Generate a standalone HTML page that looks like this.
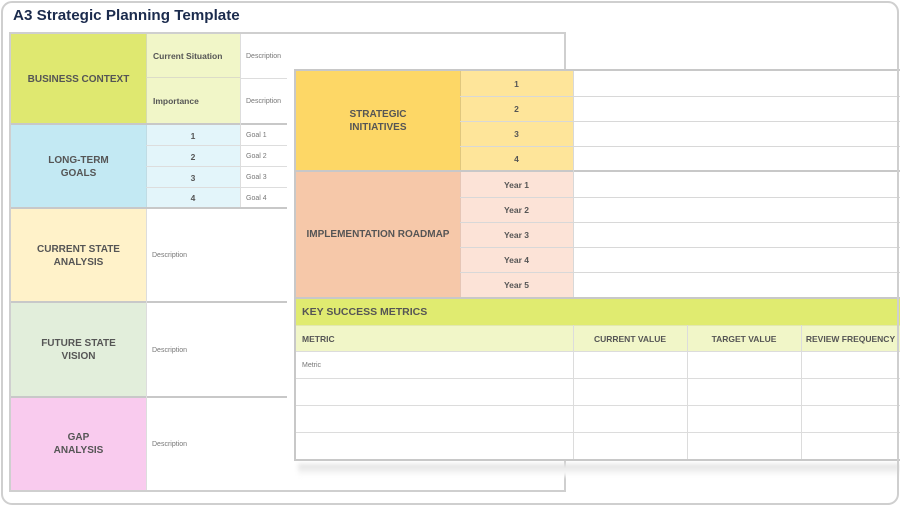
<!DOCTYPE html>
<html><head><meta charset="utf-8"><style>
*{margin:0;padding:0;box-sizing:border-box}
body{width:900px;height:506px;background:#fff;position:relative;overflow:hidden;font-family:"Liberation Sans",sans-serif}
.a{position:absolute}
.c{position:absolute;display:flex;align-items:center;justify-content:center;text-align:center;color:#555;font-weight:bold}
.l{position:absolute;display:flex;align-items:center;color:#555}
.h{font-size:10px;line-height:13px}
.s{font-size:8.5px}
.d{font-size:7px;color:#777;font-weight:normal}
</style></head><body>
<div class="a" style="left:13px;top:7px;font-size:15.2px;font-weight:bold;color:#1b2b4d">A3 Strategic Planning Template</div>

<!-- left sheet -->
<div class="a" style="left:9px;top:32px;width:557px;height:460px;border:2px solid #cfcfcf;background:#fff"></div>
<div class="c h" style="left:11px;top:34px;width:135px;height:90px;background:#dfe870">BUSINESS CONTEXT</div>
<div class="l s" style="left:146px;top:34px;width:94px;height:44px;background:#f1f6c8;padding-left:6px;font-weight:bold;border-left:1px solid #d6dcb0;border-bottom:1px solid #dcdcc8">Current Situation</div>
<div class="l s" style="left:146px;top:78px;width:94px;height:46px;background:#f1f6c8;padding-left:6px;font-weight:bold;border-left:1px solid #d6dcb0">Importance</div>
<div class="l d" style="left:246px;top:34px;height:44px">Description</div>
<div class="a" style="left:240px;top:78px;width:47px;height:1px;background:#ddd"></div>
<div class="l d" style="left:246px;top:78px;height:46px">Description</div>
<div class="a" style="left:11px;top:123px;width:276px;height:2px;background:#c8c8c8"></div>
<div class="c h" style="left:11px;top:125px;width:135px;height:83px;background:#c3e9f3">LONG-TERM<br>GOALS</div>
<div class="a" style="left:146px;top:125px;width:94px;height:83px;background:#e3f5fa;border-left:1px solid #c0dce4"></div>
<div class="c s" style="left:146px;top:125px;width:94px;height:21px">1</div>
<div class="c s" style="left:146px;top:146px;width:94px;height:21px">2</div>
<div class="c s" style="left:146px;top:167px;width:94px;height:21px">3</div>
<div class="c s" style="left:146px;top:188px;width:94px;height:20px">4</div>
<div class="l d" style="left:246px;top:125px;height:21px">Goal 1</div>
<div class="l d" style="left:246px;top:146px;height:21px">Goal 2</div>
<div class="l d" style="left:246px;top:167px;height:21px">Goal 3</div>
<div class="l d" style="left:246px;top:188px;height:20px">Goal 4</div>
<div class="a" style="left:146px;top:145px;width:141px;height:1px;background:#ddd"></div>
<div class="a" style="left:146px;top:166px;width:141px;height:1px;background:#ddd"></div>
<div class="a" style="left:146px;top:187px;width:141px;height:1px;background:#ddd"></div>
<div class="a" style="left:240px;top:34px;width:1px;height:174px;background:#ddd"></div>
<div class="a" style="left:11px;top:207px;width:276px;height:2px;background:#c8c8c8"></div>
<div class="c h" style="left:11px;top:209px;width:135px;height:93px;background:#fff2c9">CURRENT STATE<br>ANALYSIS</div>
<div class="l d" style="left:152px;top:209px;height:93px">Description</div>
<div class="a" style="left:11px;top:301px;width:276px;height:2px;background:#c8c8c8"></div>
<div class="c h" style="left:11px;top:303px;width:135px;height:94px;background:#e2eedb">FUTURE STATE<br>VISION</div>
<div class="l d" style="left:152px;top:303px;height:94px">Description</div>
<div class="a" style="left:11px;top:396px;width:276px;height:2px;background:#c8c8c8"></div>
<div class="c h" style="left:11px;top:398px;width:135px;height:92px;background:#f9cbee">GAP<br>ANALYSIS</div>
<div class="l d" style="left:152px;top:398px;height:92px">Description</div>
<div class="a" style="left:146px;top:209px;width:1px;height:281px;background:#ddd"></div>

<!-- shadow -->
<div class="a" style="left:298px;top:464px;width:602px;height:12px;background:linear-gradient(#e0e0e0,#fff);filter:blur(2px)"></div>

<!-- right sheet -->
<div class="a" style="left:294px;top:69px;width:620px;height:392px;border:2px solid #c8c8c8;background:#fff"></div>
<div class="c h" style="left:296px;top:71px;width:164px;height:100px;background:#fdd766">STRATEGIC<br>INITIATIVES</div>
<div class="a" style="left:460px;top:71px;width:113px;height:100px;background:#fee59a;border-left:1px solid #e0c77e"></div>
<div class="c s" style="left:460px;top:71px;width:113px;height:25px">1</div>
<div class="c s" style="left:460px;top:96px;width:113px;height:25px">2</div>
<div class="c s" style="left:460px;top:121px;width:113px;height:25px">3</div>
<div class="c s" style="left:460px;top:146px;width:113px;height:25px">4</div>
<div class="a" style="left:460px;top:96px;width:440px;height:1px;background:#d8d8d8"></div>
<div class="a" style="left:460px;top:121px;width:440px;height:1px;background:#d8d8d8"></div>
<div class="a" style="left:460px;top:146px;width:440px;height:1px;background:#d8d8d8"></div>
<div class="a" style="left:296px;top:170px;width:604px;height:2px;background:#c8c8c8"></div>
<div class="c h" style="left:296px;top:172px;width:164px;height:125px;background:#f6c8a9">IMPLEMENTATION ROADMAP</div>
<div class="a" style="left:460px;top:172px;width:113px;height:125px;background:#fce3d7;border-left:1px solid #e6c6b6"></div>
<div class="c s" style="left:460px;top:172px;width:113px;height:25px">Year 1</div>
<div class="c s" style="left:460px;top:197px;width:113px;height:25px">Year 2</div>
<div class="c s" style="left:460px;top:222px;width:113px;height:25px">Year 3</div>
<div class="c s" style="left:460px;top:247px;width:113px;height:25px">Year 4</div>
<div class="c s" style="left:460px;top:272px;width:113px;height:25px">Year 5</div>
<div class="a" style="left:460px;top:197px;width:440px;height:1px;background:#d8d8d8"></div>
<div class="a" style="left:460px;top:222px;width:440px;height:1px;background:#d8d8d8"></div>
<div class="a" style="left:460px;top:247px;width:440px;height:1px;background:#d8d8d8"></div>
<div class="a" style="left:460px;top:272px;width:440px;height:1px;background:#d8d8d8"></div>
<div class="a" style="left:573px;top:71px;width:1px;height:226px;background:#d8d8d8"></div>
<div class="a" style="left:296px;top:297px;width:604px;height:2px;background:#c8c8c8"></div>
<div class="l h" style="left:296px;top:299px;width:604px;height:26px;background:#e0eb70;padding-left:6px;font-weight:bold;font-size:10.5px">KEY SUCCESS METRICS</div>
<div class="a" style="left:296px;top:325px;width:604px;height:27px;background:#f1f6c8;border-top:1px solid #e2e8b0"></div>
<div class="l s" style="left:302px;top:325px;height:27px;font-weight:bold">METRIC</div>
<div class="c s" style="left:573px;top:325px;width:114px;height:27px">CURRENT VALUE</div>
<div class="c s" style="left:687px;top:325px;width:114px;height:27px">TARGET VALUE</div>
<div class="c s" style="left:801px;top:325px;width:99px;height:27px">REVIEW FREQUENCY</div>
<div class="l d" style="left:302px;top:352px;height:27px">Metric</div>
<div class="a" style="left:296px;top:351px;width:604px;height:1px;background:#dcdcdc"></div>
<div class="a" style="left:296px;top:378px;width:604px;height:1px;background:#dcdcdc"></div>
<div class="a" style="left:296px;top:405px;width:604px;height:1px;background:#dcdcdc"></div>
<div class="a" style="left:296px;top:432px;width:604px;height:1px;background:#dcdcdc"></div>
<div class="a" style="left:573px;top:325px;width:1px;height:134px;background:#dcdcdc"></div>
<div class="a" style="left:687px;top:325px;width:1px;height:134px;background:#dcdcdc"></div>
<div class="a" style="left:801px;top:325px;width:1px;height:134px;background:#dcdcdc"></div>
<!-- frame on top -->
<div class="a" style="left:1px;top:1px;width:898px;height:504px;border:2px solid #cfcfcf;border-radius:11px;z-index:5"></div>
</body></html>
